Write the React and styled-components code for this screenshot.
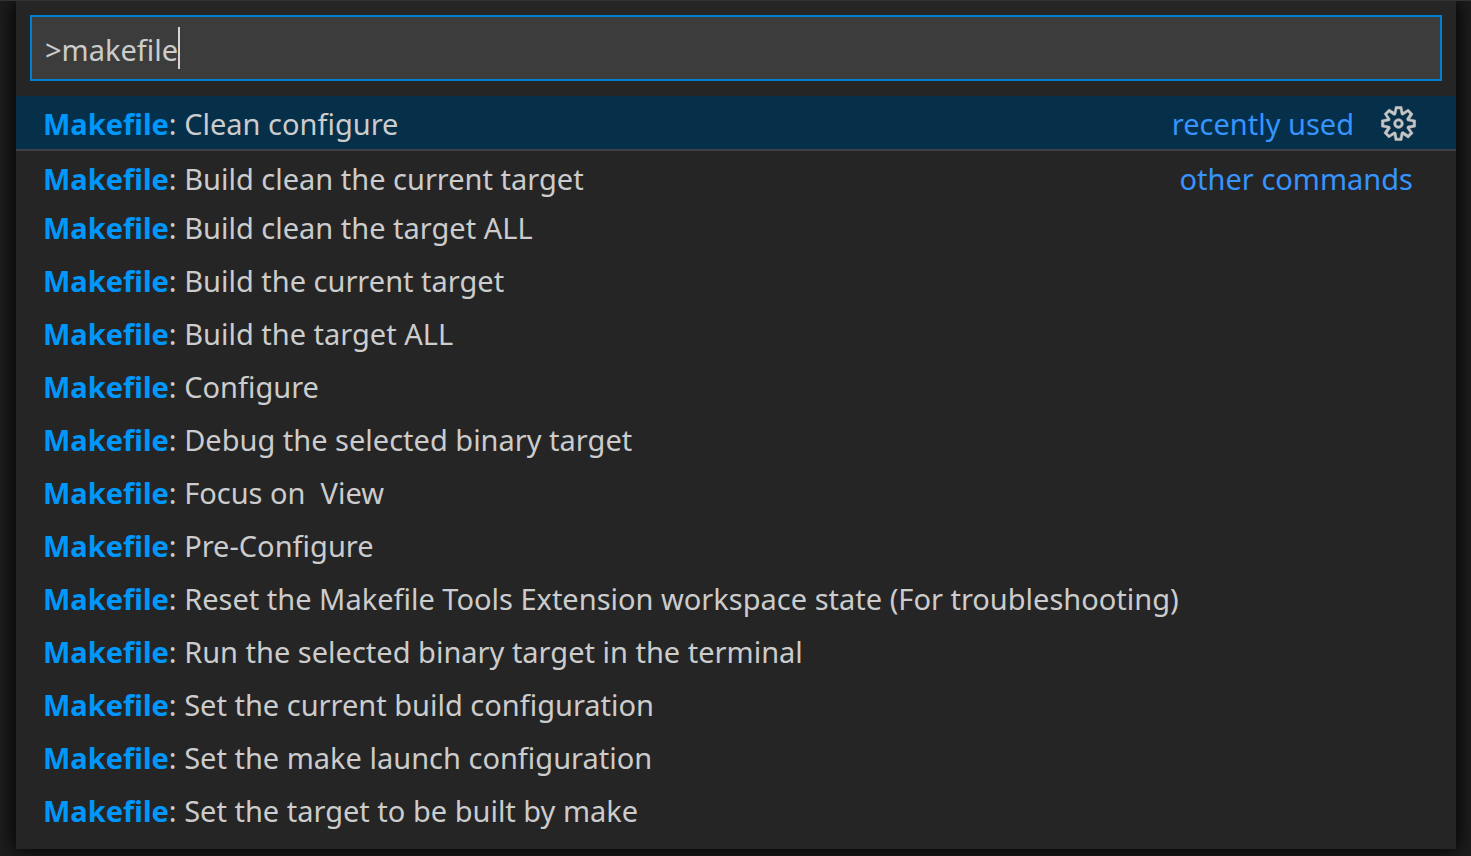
import React, { useState } from 'react';
import styled, { createGlobalStyle } from 'styled-components';

const commands = [
    { name: 'Build clean the target ALL' },
    { name: 'Build the current target' },
    { name: 'Build the target ALL' },
    { name: 'Configure' },
    { name: 'Debug the selected binary target' },
    { name: 'Focus on  View' },
    { name: 'Pre-Configure' },
    { name: 'Reset the Makefile Tools Extension workspace state (For troubleshooting)' },
    { name: 'Run the selected binary target in the terminal' },
    { name: 'Set the current build configuration' },
    { name: 'Set the make launch configuration' },
    { name: 'Set the target to be built by make' }
];

const CommandLabel = ({ name }) => (
    <Label>
        <Match>Makefile</Match>: {name}
    </Label>
);

const GearIcon = () => (
    <svg
        width="39"
        height="39"
        viewBox="0 0 16 16"
        fill="currentColor"
        stroke="currentColor"
        strokeWidth="0.2"
        aria-hidden="true"
    >
        <path
            fillRule="evenodd"
            clipRule="evenodd"
            d="M9.1 4.4L8.6 2H7.4l-.5 2.4-.7.3-2-1.3-.9.8 1.3 2-.2.7-2.4.5v1.2l2.4.5.3.8-1.3 2 .8.8 2-1.3.8.3.4 2.3h1.2l.5-2.4.8-.3 2 1.3.8-.8-1.3-2 .3-.8 2.3-.4V7.4l-2.4-.5-.3-.8 1.3-2-.8-.8-2 1.3-.7-.2zM9.4 1l.5 2.4L12 2.1l2 2-1.4 2.1 2.4.4v2.8l-2.4.5L14 12l-2 2-2.1-1.4-.5 2.4H6.6l-.5-2.4L4 13.9l-2-2 1.4-2.1L1 9.4V6.6l2.4-.5L2.1 4l2-2 2.1 1.3.5-2.3h2.7zm.6 7c0 1.1-.9 2-2 2s-2-.9-2-2 .9-2 2-2 2 .9 2 2zM8 9c.6 0 1-.4 1-1s-.4-1-1-1-1 .4-1 1 .4 1 1 1z"
        />
    </svg>
);

const App = () => {
    const [query, setQuery] = useState('>makefile');

    return (
        <Backdrop>
            <GlobalStyle />
            <Palette>
                <SearchBox>
                    <SearchInput
                        aria-label="Command"
                        spellCheck={false}
                        value={query}
                        onChange={e => setQuery(e.target.value)}
                    />
                    <Caret />
                </SearchBox>
                <CommandList>
                    <Row $selected>
                        <CommandLabel name="Clean configure" />
                        <Group>recently used</Group>
                        <GearButton aria-label="Configure keybinding">
                            <GearIcon />
                        </GearButton>
                    </Row>
                    <Row $first>
                        <CommandLabel name="Build clean the current target" />
                        <Group>other commands</Group>
                    </Row>
                    {commands.map(({ name }) => (
                        <Row key={name}>
                            <CommandLabel name={name} />
                        </Row>
                    ))}
                </CommandList>
            </Palette>
        </Backdrop>
    );
};

const GlobalStyle = createGlobalStyle`
    * {
        box-sizing: border-box;
    }

    body {
        margin: 0;
        background: #1e1e1e;
        color: #cccccc;
        font-family: 'Noto Sans', 'Open Sans', sans-serif;
        font-size: 29px;
        line-height: 42px;
    }
`;

const Backdrop = styled.main`
    min-height: 100vh;
    padding: 0 15px 7px 16px;
    border-top: 1px solid #333333;
    overflow: hidden;
`;

const Palette = styled.section`
    padding: 14px 0 12px;
    background: #252526;
    box-shadow: 0 0 20px 2px #000000;
`;

const SearchBox = styled.div`
    display: flex;
    align-items: center;
    height: 66px;
    margin: 0 14px 15px;
    padding: 0 13px;
    border: 2px solid #007fd4;
    background: #3c3c3c;
`;

const SearchInput = styled.input`
    field-sizing: content;
    padding: 4px 0 0;
    border: 0;
    outline: 0;
    background: none;
    color: inherit;
    font: inherit;
    caret-color: transparent;
`;

const Caret = styled.span`
    width: 2px;
    height: 42px;
    background: #d4d4d4;
`;

const CommandList = styled.ul`
    margin: 0;
    padding: 0;
    list-style: none;
`;

const rowHeight = ({ $selected, $first }) => ($selected ? 55 : $first ? 50 : 53);
const rowPaddingTop = ({ $selected, $first }) => ($selected ? 2 : $first ? 6 : 0);

const Row = styled.li`
    display: flex;
    align-items: center;
    height: ${rowHeight}px;
    padding: ${rowPaddingTop}px ${props => (props.$selected ? 38 : 43)}px 0 27px;
    border-bottom: ${props => (props.$selected ? '2px solid #3f3f46' : '0')};
    background: ${props => (props.$selected ? '#062f4a' : 'none')};
`;

const Label = styled.span`
    flex: 1;
    white-space: pre;
`;

const Match = styled.strong`
    color: #0097fb;
    font-weight: 700;
`;

const Group = styled.span`
    color: #3794ff;
`;

const GearButton = styled.button`
    display: flex;
    margin-left: 25px;
    padding: 0;
    border: 0;
    background: none;
    color: #c5c5c5;
`;

export default App;
